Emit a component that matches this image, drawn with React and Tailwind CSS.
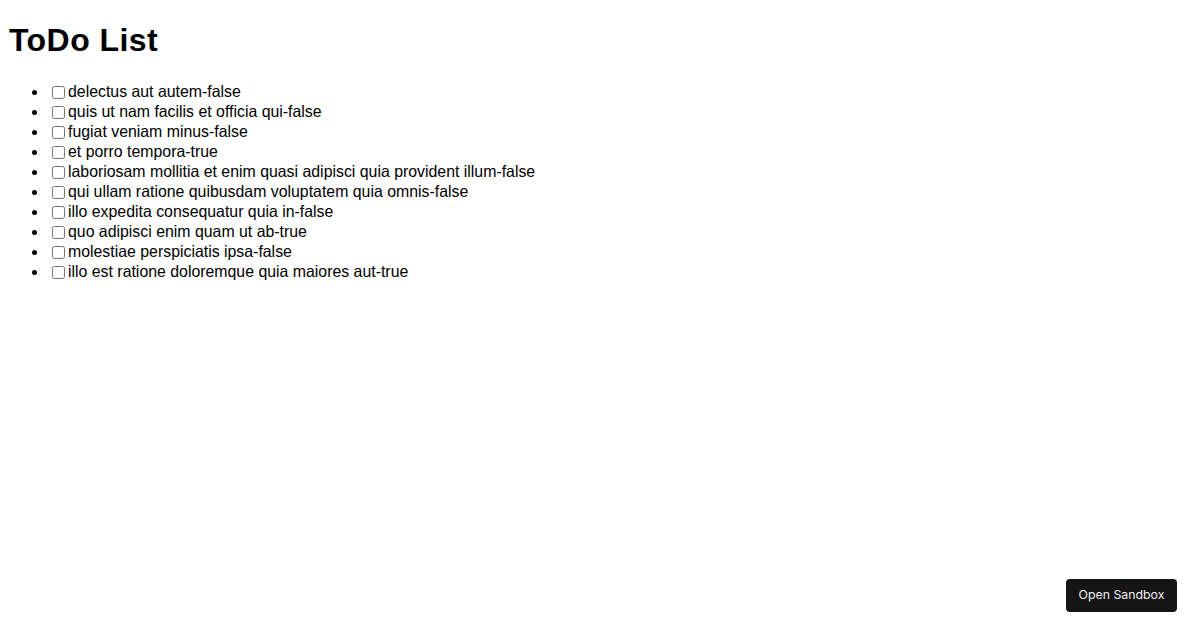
import React from "react";

const todos = [
  "delectus aut autem-false",
  "quis ut nam facilis et officia qui-false",
  "fugiat veniam minus-false",
  "et porro tempora-true",
  "laboriosam mollitia et enim quasi adipisci quia provident illum-false",
  "qui ullam ratione quibusdam voluptatem quia omnis-false",
  "illo expedita consequatur quia in-false",
  "quo adipisci enim quam ut ab-true",
  "molestiae perspiciatis ipsa-false",
  "illo est ratione doloremque quia maiores aut-true",
];

export default function App() {
  return (
    <div className="min-h-[630px] bg-white text-black font-['Liberation_Sans',Arial,sans-serif] px-2 pt-[22px]">
      <h1 className="text-[32px] font-bold leading-[37px] m-0 ml-px tracking-[0.45px]">ToDo List</h1>
      <ul className="list-disc pl-10 mt-[23px] text-[15.86px] leading-5">
        {todos.map((t, i) => (
          <li key={i} className="h-5">
            <span className="inline-flex items-center h-5 align-top">
              <input type="checkbox" className="w-[13px] h-[13px] ml-1 mr-[3px] appearance-auto" />
              <span>{t}</span>
            </span>
          </li>
        ))}
      </ul>
      <button className="fixed right-[23px] bottom-[18px] w-[111px] h-[33px] rounded-[4px] bg-[#151515] text-[#f2f2f2] text-[12.3px] font-['Inter',sans-serif]">
        Open Sandbox
      </button>
    </div>
  );
}
